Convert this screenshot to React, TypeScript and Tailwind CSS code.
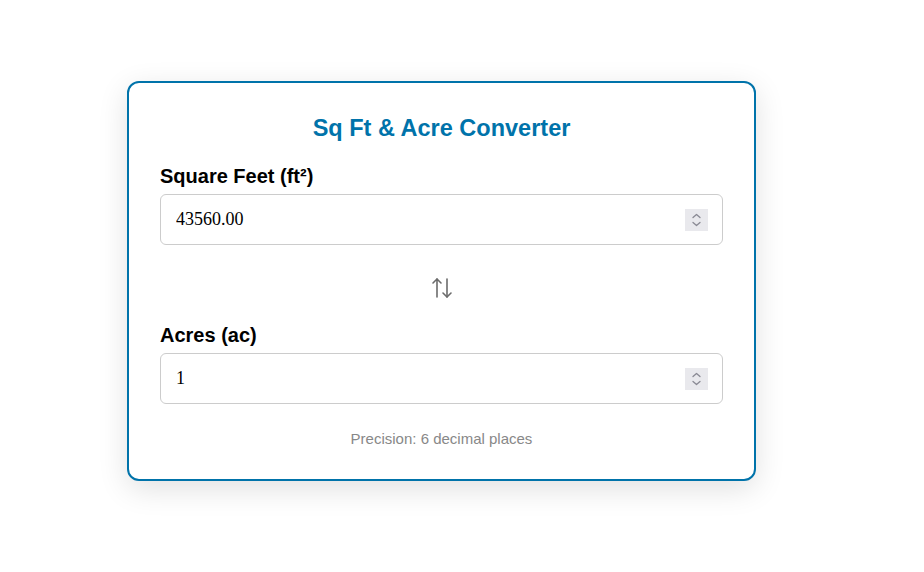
import React, { useState } from "react";

function Spinner() {
  return (
    <div className="pointer-events-none absolute right-[15px] top-[15px] flex h-[22px] w-[23px] items-center justify-center bg-[#e9e9ed]">
      <svg width="23" height="22" viewBox="0 0 23 22" fill="none" stroke="#8a8a94" strokeWidth="1.3" strokeLinecap="round" strokeLinejoin="round">
        <path d="M8 8.5 L11.5 5.5 L15 8.5" />
        <path d="M8 13.5 L11.5 16.5 L15 13.5" />
      </svg>
    </div>
  );
}

function NumInput({ value, onChange }: { value: string; onChange: (v: string) => void }) {
  return (
    <div className="relative mt-[7px]">
      <input
        type="text"
        inputMode="decimal"
        value={value}
        onChange={(e) => onChange(e.target.value)}
        className="block h-[51px] w-full rounded-[6px] border border-[#cccccc] px-[15px] text-[18px] text-black outline-none"
        style={{ fontFamily: '"Liberation Serif", "Times New Roman", serif' }}
      />
      <Spinner />
    </div>
  );
}

export default function App() {
  const [sqft, setSqft] = useState("43560.00");
  const [acres, setAcres] = useState("1");
  return (
    <div className="min-h-[572px] w-[924px] bg-white" style={{ fontFamily: '"Liberation Sans", Arial, sans-serif' }}>
      <div className="pt-[81px] pl-[127px]">
        <div className="w-[629px] rounded-[12px] border-2 border-[#0073aa] bg-white px-[31px] pt-[31px] pb-[31px] shadow-[0_8px_30px_rgba(0,0,0,0.12)]">
          <h2 className="text-center text-[23.5px] leading-[28px] font-bold text-[#0073aa]">Sq Ft &amp; Acre Converter</h2>
          <label className="mt-[23px] block text-[20px] leading-[22px] font-bold text-black">Square Feet (ft²)</label>
          <NumInput value={sqft} onChange={setSqft} />
          <div className="mt-[31px] flex h-[24px] items-center justify-center">
            <svg width="22" height="22" viewBox="0 0 22 22" fill="none" stroke="#6b6b6b" strokeWidth="1.6" strokeLinecap="round" strokeLinejoin="round">
              <path d="M6 2 V20" />
              <path d="M2 6 L6 2 L10 6" />
              <path d="M16 2 V20" />
              <path d="M12 16 L16 20 L20 16" />
            </svg>
          </div>
          <label className="mt-[24px] block text-[20px] leading-[22px] font-bold text-black">Acres (ac)</label>
          <NumInput value={acres} onChange={setAcres} />
          <p className="mt-[26px] text-center text-[15px] leading-[18px] text-[#888888]">Precision: 6 decimal places</p>
        </div>
      </div>
    </div>
  );
}
